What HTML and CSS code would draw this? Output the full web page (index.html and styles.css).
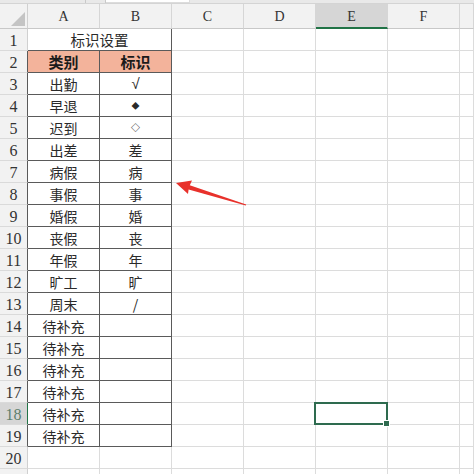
FILE: index.html
```html
<!DOCTYPE html>
<html lang="zh">
<head>
<meta charset="utf-8">
<title>标识设置</title>
<link rel="stylesheet" href="styles.css">
</head>
<body>
<div class="page">
  <div class="toolbar"><span class="tb a"></span><span class="tb b"></span><span class="tb c"></span></div>
  <div class="sheet">
    <div class="corner"><svg width="14" height="14" viewBox="0 0 14 14"><polygon points="14,0 14,14 0,14" fill="#c4c4c4"/></svg></div>
    <div class="ch">A</div><div class="ch">B</div><div class="ch">C</div><div class="ch">D</div><div class="ch active">E</div><div class="ch">F</div><div class="ch"></div>

    <div class="rh">1</div><div class="c span2 t1">标识设置</div><div class="c"></div><div class="c"></div><div class="c"></div><div class="c"></div><div class="c"></div>
    <div class="rh tl">2</div><div class="c t hd">类别</div><div class="c t hd">标识</div><div class="c"></div><div class="c"></div><div class="c"></div><div class="c"></div><div class="c"></div>
    <div class="rh tl">3</div><div class="c t">出勤</div><div class="c t"><span class="chk">√</span></div><div class="c"></div><div class="c"></div><div class="c"></div><div class="c"></div><div class="c"></div>
    <div class="rh tl">4</div><div class="c t">早退</div><div class="c t"><span class="sym">◆</span></div><div class="c"></div><div class="c"></div><div class="c"></div><div class="c"></div><div class="c"></div>
    <div class="rh tl">5</div><div class="c t">迟到</div><div class="c t"><span class="sym hollow">◇</span></div><div class="c"></div><div class="c"></div><div class="c"></div><div class="c"></div><div class="c"></div>
    <div class="rh tl">6</div><div class="c t">出差</div><div class="c t">差</div><div class="c"></div><div class="c"></div><div class="c"></div><div class="c"></div><div class="c"></div>
    <div class="rh tl">7</div><div class="c t">病假</div><div class="c t">病</div><div class="c"></div><div class="c"></div><div class="c"></div><div class="c"></div><div class="c"></div>
    <div class="rh tl">8</div><div class="c t">事假</div><div class="c t">事</div><div class="c"></div><div class="c"></div><div class="c"></div><div class="c"></div><div class="c"></div>
    <div class="rh tl">9</div><div class="c t">婚假</div><div class="c t">婚</div><div class="c"></div><div class="c"></div><div class="c"></div><div class="c"></div><div class="c"></div>
    <div class="rh tl">10</div><div class="c t">丧假</div><div class="c t">丧</div><div class="c"></div><div class="c"></div><div class="c"></div><div class="c"></div><div class="c"></div>
    <div class="rh tl">11</div><div class="c t">年假</div><div class="c t">年</div><div class="c"></div><div class="c"></div><div class="c"></div><div class="c"></div><div class="c"></div>
    <div class="rh tl">12</div><div class="c t">旷工</div><div class="c t">旷</div><div class="c"></div><div class="c"></div><div class="c"></div><div class="c"></div><div class="c"></div>
    <div class="rh tl">13</div><div class="c t">周末</div><div class="c t">/</div><div class="c"></div><div class="c"></div><div class="c"></div><div class="c"></div><div class="c"></div>
    <div class="rh tl">14</div><div class="c t">待补充</div><div class="c t"></div><div class="c"></div><div class="c"></div><div class="c"></div><div class="c"></div><div class="c"></div>
    <div class="rh tl">15</div><div class="c t">待补充</div><div class="c t"></div><div class="c"></div><div class="c"></div><div class="c"></div><div class="c"></div><div class="c"></div>
    <div class="rh tl">16</div><div class="c t">待补充</div><div class="c t"></div><div class="c"></div><div class="c"></div><div class="c"></div><div class="c"></div><div class="c"></div>
    <div class="rh tl">17</div><div class="c t">待补充</div><div class="c t"></div><div class="c"></div><div class="c"></div><div class="c"></div><div class="c"></div><div class="c"></div>
    <div class="rh tl active">18</div><div class="c t">待补充</div><div class="c t"></div><div class="c"></div><div class="c"></div><div class="c sel"></div><div class="c"></div><div class="c"></div>
    <div class="rh tl">19</div><div class="c t">待补充</div><div class="c t"></div><div class="c"></div><div class="c"></div><div class="c"></div><div class="c"></div><div class="c"></div>
    <div class="rh">20</div><div class="c"></div><div class="c"></div><div class="c"></div><div class="c"></div><div class="c"></div><div class="c"></div><div class="c"></div>
    <div class="rh"></div><div class="c"></div><div class="c"></div><div class="c"></div><div class="c"></div><div class="c"></div><div class="c"></div><div class="c"></div>
  </div>
  <svg class="arrow" width="474" height="474" viewBox="0 0 474 474">
    <polygon points="176,183 192,180.5 189.8,185.2 246.2,204.6 245.8,205.4 188.6,189.4 188,194" fill="#e8312b"/>
  </svg>
</div>
</body>
</html>
```

FILE: styles.css
```css
* { box-sizing: border-box; }
html, body { margin: 0; padding: 0; background: #ffffff; }
.page {
  position: relative;
  width: 474px;
  height: 474px;
  overflow: hidden;
  font-family: "Noto Sans CJK SC", "Noto Sans", sans-serif;
}
.toolbar {
  height: 4px;
  background: #e9e9e9;
  border-bottom: 1px solid #d4d4d4;
  display: flex;
}
.tb { height: 3px; border-right: 1px solid #c9c9c9; }
.tb.a { width: 86px; }
.tb.b { width: 20px; }
.tb.c { width: 84px; }
.sheet {
  display: grid;
  grid-template-columns: 28px repeat(6, 72px) 1fr;
  grid-template-rows: 25px;
  grid-auto-rows: 22px;
}
.corner {
  background: #f2f2f2;
  border-right: 1px solid #d0d0d0;
  border-bottom: 1px solid #c8c8c8;
  display: flex;
  align-items: flex-end;
  justify-content: flex-end;
  padding: 0 2px 2px 0;
}
.ch {
  background: #f2f2f2;
  border-right: 1px solid #d6d6d6;
  border-bottom: 1px solid #c8c8c8;
  font-family: "Liberation Serif", "DejaVu Serif", serif;
  font-size: 14px;
  color: #333;
  display: flex;
  align-items: center;
  justify-content: center;
  padding-top: 2px;
}
.ch.active {
  background: #d6d6d6;
  border-bottom: 2px solid #217346;
}
.rh {
  background: #f2f2f2;
  border-right: 1px solid #d0d0d0;
  border-bottom: 1px solid #dadada;
  font-family: "Liberation Serif", "DejaVu Serif", serif;
  font-size: 16px;
  color: #333;
  display: flex;
  align-items: center;
  justify-content: center;
  padding-top: 2px;
}
.rh.tl { border-right: 1px solid #5a5a5a; }
.rh.active {
  background: #d6d6d6;
  color: #5e7f6c;
  border-right: 1px solid #217346;
}
.c {
  border-right: 1px solid #dcdcdc;
  border-bottom: 1px solid #dcdcdc;
  font-size: 14px;
  color: #2a2a2a;
  display: flex;
  align-items: center;
  justify-content: center;
  background: #fff;
}
.span2 { grid-column: span 2; }
.t1 { border-right: 1px solid #5a5a5a; border-bottom: 1px solid #5a5a5a; font-size: 14.5px; }
.t { border-right: 1px solid #5a5a5a; border-bottom: 1px solid #5a5a5a; }
.hd { background: #f3b39b; font-weight: 700; font-size: 15px; color: #1a1a1a; }
.chk { font-family: "Liberation Sans", "DejaVu Sans", sans-serif; font-size: 15px; }
.sym { font-size: 8px; line-height: 1; }
.sym.hollow { font-size: 9px; color: #222; font-weight: 700; }
.sel { position: relative; }
.sel::after {
  content: "";
  position: absolute;
  left: -2px;
  top: -1px;
  right: -1px;
  bottom: -1px;
  border: 2px solid #2e6b4f;
}
.sel::before {
  content: "";
  position: absolute;
  right: -3px;
  bottom: -3px;
  width: 5px;
  height: 5px;
  background: #2e6b4f;
  border: 1px solid #fff;
  z-index: 2;
}
.arrow {
  position: absolute;
  left: 0;
  top: 0;
  pointer-events: none;
}
```
